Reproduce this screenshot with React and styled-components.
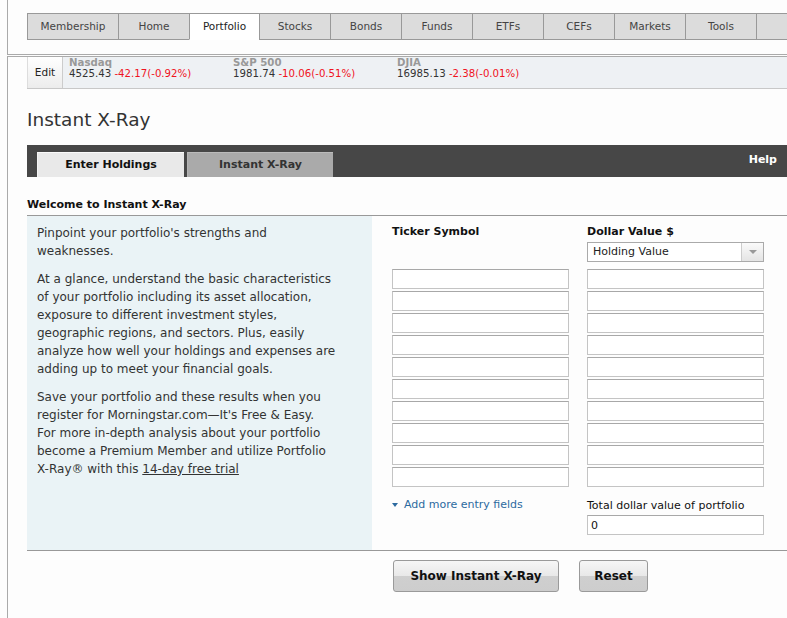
import React from 'react'
import styled, { createGlobalStyle } from 'styled-components'

const GlobalStyle = createGlobalStyle`
  html, body {
    margin: 0;
    padding: 0;
    background: #fdfdfd;
    overflow: hidden;
  }
  body {
    font-family: "DejaVu Sans", Verdana, sans-serif;
    color: #333;
  }
`

const Frame = styled.div`
  margin-left: 7px;
  width: 780px;
  height: 618px;
  overflow: hidden;
`

const Header = styled.div`
  height: 55px;
  border-left: 1px solid #aaa;
  border-bottom: 1px solid #aaa;
  box-sizing: border-box;
  padding: 13px 0 0 19px;
`

const TabBar = styled.ul`
  display: flex;
  list-style: none;
  margin: 0;
  padding: 0;
`

const Tab = styled.li`
  flex-shrink: 0;
  box-sizing: border-box;
  width: ${props => props.width || 72}px;
  height: 27px;
  margin-left: -1px;
  border: 1px solid #999;
  border-bottom-color: ${props => props.active ? '#fff' : '#999'};
  background: ${props => props.active ? '#fff' : '#dcdcdc'};
  color: ${props => props.active ? '#222' : '#444'};
  font-size: 10.5px;
  line-height: 25px;
  text-align: center;
  white-space: nowrap;
  &:first-child {
    margin-left: 0;
  }
`

const Content = styled.div`
  margin-top: 1px;
  border-left: 1px solid #aaa;
  border-top: 1px solid #aaa;
  padding-left: 19px;
  height: 600px;
`

const Ticker = styled.div`
  display: flex;
  height: 31px;
  background: #eef1f4;
  border-bottom: 1px solid #c8c8c8;
`

const EditBox = styled.div`
  width: 34px;
  border-left: 1px solid #ddd;
  border-right: 1px solid #ccc;
  background: linear-gradient(#ffffff, #ececec);
  font-size: 10.5px;
  line-height: 31px;
  text-align: center;
  color: #222;
`

const Quote = styled.div`
  width: 164px;
  padding: 2px 0 0 6px;
  box-sizing: border-box;
  font-size: 10.2px;
  line-height: 10px;
  white-space: nowrap;
`

const QuoteName = styled.div`
  color: #999;
  font-weight: bold;
  height: 10px;
  line-height: 8px;
`

const Change = styled.span`
  color: #f0141e;
`

const Title = styled.h1`
  margin: 0;
  padding: 20px 0 0 0;
  height: 56px;
  box-sizing: border-box;
  font-size: 18.5px;
  font-weight: normal;
  color: #333;
`

const DarkBar = styled.div`
  display: flex;
  align-items: flex-end;
  height: 32px;
  background: #474747;
  padding-left: 10px;
  gap: 3px;
`

const SubTab = styled.div`
  box-sizing: border-box;
  width: ${props => props.width}px;
  height: 25px;
  border-top: 1px solid ${props => props.active ? '#fafafa' : '#bbb'};
  border-left: 1px solid ${props => props.active ? '#f4f4f4' : '#b4b4b4'};
  background: ${props => props.active ? '#e9e9e9' : '#aaaaaa'};
  color: ${props => props.active ? '#111' : '#333'};
  font-size: 11px;
  font-weight: bold;
  line-height: 24px;
  text-align: center;
`

const Help = styled.div`
  margin-left: auto;
  align-self: flex-start;
  padding: 8px 10px 0 0;
  color: #fff;
  font-size: 11px;
  font-weight: bold;
`

const Welcome = styled.h2`
  margin: 0;
  height: 39px;
  box-sizing: border-box;
  padding-top: 21px;
  font-size: 11px;
  font-weight: bold;
  color: #111;
  border-bottom: 1px solid #999;
`

const Panel = styled.div`
  display: flex;
  border-bottom: 1px solid #999;
`

const Intro = styled.div`
  width: 345px;
  box-sizing: border-box;
  padding: 8px 10px 0 10px;
  background: #eaf3f6;
  font-size: 12px;
  line-height: 18px;
  color: #333;
  white-space: nowrap;
  p {
    margin: 0 0 10px 0;
  }
  a {
    color: #333;
    text-decoration: underline;
  }
`

const Entry = styled.div`
  display: flex;
  gap: 18px;
  padding: 9px 0 13px 20px;
`

const Column = styled.div`
  display: flex;
  flex-direction: column;
  width: 177px;
`

const Label = styled.div`
  height: 14px;
  line-height: 14px;
  margin-bottom: 3px;
  font-size: 11px;
  font-weight: ${props => props.bold ? 'bold' : 'normal'};
  color: #111;
  white-space: nowrap;
`

const Spacer = styled.div`
  height: 20px;
  margin-bottom: 7px;
`

const Select = styled.div`
  display: flex;
  height: 20px;
  margin-bottom: 7px;
  box-sizing: border-box;
  border: 1px solid #aaa;
  background: #fff;
  font-size: 11px;
  line-height: 18px;
  color: #222;
`

const SelectText = styled.span`
  flex: 1;
  padding-left: 5px;
`

const SelectArrow = styled.span`
  width: 21px;
  border-left: 1px solid #ccc;
  background: linear-gradient(#fafafa, #e4e4e4);
  display: flex;
  align-items: center;
  justify-content: center;
  &::after {
    content: '';
    border-left: 4px solid transparent;
    border-right: 4px solid transparent;
    border-top: 4px solid #999;
  }
`

const Input = styled.input`
  box-sizing: border-box;
  width: 177px;
  height: 20px;
  margin: 0 0 2px 0;
  padding: 0 3px;
  border: 1px solid #c4c4c4;
  border-top-color: #a8a8a8;
  background: #fff;
  font-family: "DejaVu Sans", Verdana, sans-serif;
  font-size: 11px;
  color: #111;
  outline: none;
`

const AddMore = styled.a`
  display: flex;
  align-items: center;
  gap: 6px;
  margin-top: 9px;
  font-size: 11px;
  color: #2c6aa0;
  text-decoration: none;
  &::before {
    content: '';
    border-left: 3.5px solid transparent;
    border-right: 3.5px solid transparent;
    border-top: 4px solid #2c6aa0;
  }
`

const TotalLabel = styled(Label)`
  margin-top: 10px;
  margin-bottom: 2px;
`

const Actions = styled.div`
  display: flex;
  gap: 20px;
  padding: 9px 0 0 366px;
`

const Button = styled.button`
  box-sizing: border-box;
  width: ${props => props.width}px;
  height: 32px;
  border: 1px solid #9a9a9a;
  border-radius: 3px;
  background: linear-gradient(#f6f6f6 0%, #e8e8e8 50%, #cfcfcf 51%, #cdcdcd 100%);
  font-family: "DejaVu Sans", Verdana, sans-serif;
  font-size: 12px;
  font-weight: bold;
  color: #111;
  padding: 0;
`

const tabs = [
  { name: 'Membership', width: 92 },
  { name: 'Home' },
  { name: 'Portfolio', width: 71, active: true },
  { name: 'Stocks' },
  { name: 'Bonds' },
  { name: 'Funds' },
  { name: 'ETFs' },
  { name: 'CEFs' },
  { name: 'Markets' },
  { name: 'Tools' },
  { name: '' }
]

const quotes = [
  { name: 'Nasdaq', value: '4525.43', change: '-42.17(-0.92%)' },
  { name: 'S&P 500', value: '1981.74', change: '-10.06(-0.51%)' },
  { name: 'DJIA', value: '16985.13', change: '-2.38(-0.01%)' }
]

const rows = Array.from({ length: 10 }, (_, i) => i)

export default function App () {
  return (
    <Frame>
      <GlobalStyle />
      <Header>
        <TabBar>
          {tabs.map((tab, i) => (
            <Tab key={i} width={tab.width} active={tab.active}>{tab.name}</Tab>
          ))}
        </TabBar>
      </Header>
      <Content>
        <Ticker>
          <EditBox>Edit</EditBox>
          {quotes.map(q => (
            <Quote key={q.name}>
              <QuoteName>{q.name}</QuoteName>
              {q.value} <Change>{q.change}</Change>
            </Quote>
          ))}
        </Ticker>
        <Title>Instant X-Ray</Title>
        <DarkBar>
          <SubTab width={147} active>Enter Holdings</SubTab>
          <SubTab width={146}>Instant X-Ray</SubTab>
          <Help>Help</Help>
        </DarkBar>
        <Welcome>Welcome to Instant X-Ray</Welcome>
        <Panel>
          <Intro>
            <p>Pinpoint your portfolio's strengths and<br />weaknesses.</p>
            <p>
              At a glance, understand the basic characteristics<br />
              of your portfolio including its asset allocation,<br />
              exposure to different investment styles,<br />
              geographic regions, and sectors. Plus, easily<br />
              analyze how well your holdings and expenses are<br />
              adding up to meet your financial goals.
            </p>
            <p>
              Save your portfolio and these results when you<br />
              register for Morningstar.com—It's Free &amp; Easy.<br />
              For more in-depth analysis about your portfolio<br />
              become a Premium Member and utilize Portfolio<br />
              X-Ray® with this <a href='#'>14-day free trial</a>
            </p>
          </Intro>
          <Entry>
            <Column>
              <Label bold>Ticker Symbol</Label>
              <Spacer />
              {rows.map(i => <Input key={i} type='text' />)}
              <AddMore href='#'>Add more entry fields</AddMore>
            </Column>
            <Column>
              <Label bold>Dollar Value $</Label>
              <Select>
                <SelectText>Holding Value</SelectText>
                <SelectArrow />
              </Select>
              {rows.map(i => <Input key={i} type='text' />)}
              <TotalLabel>Total dollar value of portfolio</TotalLabel>
              <Input type='text' defaultValue='0' />
            </Column>
          </Entry>
        </Panel>
        <Actions>
          <Button width={166}>Show Instant X-Ray</Button>
          <Button width={69}>Reset</Button>
        </Actions>
      </Content>
    </Frame>
  )
}
